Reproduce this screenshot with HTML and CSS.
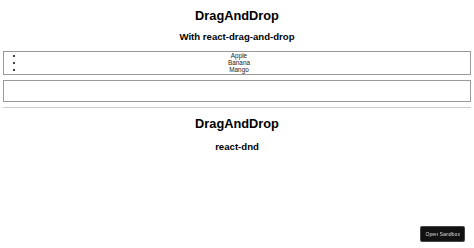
FILE: index.html
```html
<!DOCTYPE html>
<html>
<head>
<meta charset="utf-8">
<link rel="stylesheet" href="styles.css">
</head>
<body>
<div class="app">
  <h1 class="title">DragAndDrop</h1>
  <h2 class="subtitle">With react-drag-and-drop</h2>
  <ul class="source">
    <li>Apple</li>
    <li>Banana</li>
    <li>Mango</li>
  </ul>
  <div class="target"></div>
  <hr class="divider">
  <h1 class="title second">DragAndDrop</h1>
  <h2 class="subtitle">react-dnd</h2>
</div>
<a class="sandbox-btn">Open Sandbox</a>
</body>
</html>
```
FILE: styles.css
```css
html, body {
  background: #fff;
}
body {
  margin: 0 3.2px;
  font-family: "Liberation Sans", Arial, sans-serif;
  font-size: 6.4px;
  color: #000;
}
.app {
  display: flex;
  flex-direction: column;
  text-align: center;
  padding-top: 9.4px;
}
.title {
  font-size: 12.8px;
  line-height: 14.7px;
  margin: 0 0 7px;
  font-weight: bold;
}
.title.second {
  margin-top: 9px;
  margin-bottom: 9px;
}
.subtitle {
  font-size: 9.6px;
  line-height: 11px;
  margin: 0 0 8.6px;
  font-weight: bold;
}
.source {
  margin: 0 0 5.7px;
  padding: 0 0 0 20px;
  border: 1px solid #999;
  list-style: disc;
}
.source li {
  line-height: 7.3px;
  color: #222;
  padding-right: 16px;
}
.source li::marker {
  font-size: 8px;
  color: #000;
}
.target {
  min-height: 19.5px;
  border: 1px solid #999;
  margin-bottom: 5.5px;
}
.divider {
  margin: 0;
  border: none;
  border-top: 1px solid #ccc;
  height: 0;
}
.sandbox-btn {
  position: fixed;
  right: 10px;
  bottom: 7px;
  background: #111;
  color: #ddd;
  font-size: 5.2px;
  line-height: 14px;
  padding: 0 4px;
  border-radius: 1px;
  box-shadow: 0 0 0 1px #444;
}
```
